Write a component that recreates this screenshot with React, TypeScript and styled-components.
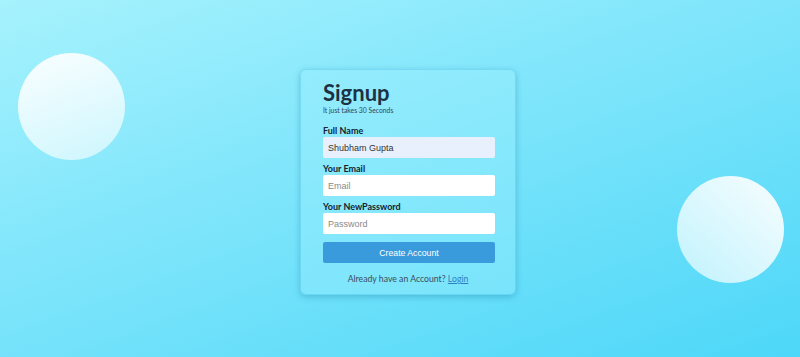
import React from 'react';
import styled, { createGlobalStyle } from 'styled-components';

const GlobalStyle = createGlobalStyle`
  html, body {
    margin: 0;
    padding: 0;
  }
  body {
    font-family: Lato, "Noto Sans", sans-serif;
  }
`;

const Page = styled.div`
  position: relative;
  width: 800px;
  height: 357px;
  overflow: hidden;
  background: linear-gradient(160deg, #a6f2fd 0%, #7ee5fb 45%, #4dd7f8 100%);
  display: flex;
  justify-content: center;
  align-items: flex-start;
  padding: 69px 0 0 16px;
  box-sizing: border-box;
`;

const Bubble = styled.div<{ $left: number; $top: number; $angle: number }>`
  position: absolute;
  left: ${p => p.$left}px;
  top: ${p => p.$top}px;
  width: 107px;
  height: 107px;
  border-radius: 50%;
  background: linear-gradient(${p => p.$angle}deg, rgba(255, 255, 255, 0.95) 0%, rgba(225, 250, 255, 0.75) 100%);
`;

const Card = styled.div`
  position: relative;
  width: 216px;
  height: 226px;
  box-sizing: border-box;
  padding: 10px 22px 0;
  border-radius: 6px;
  background: rgba(160, 240, 255, 0.35);
  border: 1px solid rgba(70, 190, 225, 0.35);
  box-shadow: 0 2px 6px rgba(20, 120, 160, 0.35);
  display: flex;
  flex-direction: column;
`;

const Title = styled.h1`
  margin: 0;
  font-size: 22px;
  font-weight: 700;
  line-height: 26px;
  color: #1d3145;
`;

const Subtitle = styled.p`
  margin: 0 0 10px;
  font-size: 6.8px;
  line-height: 9px;
  color: #344656;
`;

const Label = styled.label`
  display: block;
  font-size: 9px;
  font-weight: 700;
  line-height: 11px;
  color: #14232f;
  margin-bottom: 1px;
`;

const Input = styled.input<{ $filled?: boolean }>`
  display: block;
  width: 172px;
  height: 21px;
  box-sizing: border-box;
  border: none;
  border-radius: 2px;
  padding: 0 5px;
  margin-bottom: 5px;
  font-family: "Liberation Sans", Arial, sans-serif;
  font-size: 9px;
  color: #333;
  background: ${p => (p.$filled ? '#e8f0fe' : '#ffffff')};
  outline: none;

  &::placeholder {
    color: #8a8a8a;
  }
`;

const Button = styled.button`
  width: 172px;
  height: 21px;
  margin-top: 3px;
  border: none;
  border-radius: 2px;
  background: #3a9bdc;
  color: #ffffff;
  font-family: "Liberation Sans", Arial, sans-serif;
  font-size: 8.7px;
  cursor: pointer;
`;

const Footer = styled.p`
  margin: 10px 0 0;
  text-align: center;
  font-size: 8.7px;
  line-height: 11px;
  color: #3a4d5c;
`;

const LoginLink = styled.a`
  color: #2b7fc1;
  text-decoration: underline;
`;

export default function App() {
  return (
    <>
      <GlobalStyle />
      <Page>
        <Bubble $left={18} $top={53} $angle={160} />
        <Bubble $left={677} $top={176} $angle={225} />
        <Card>
          <Title>Signup</Title>
          <Subtitle>It just takes 30 Seconds</Subtitle>
          <Label>Full Name</Label>
          <Input $filled defaultValue="Shubham Gupta" />
          <Label>Your Email</Label>
          <Input placeholder="Email" />
          <Label>Your NewPassword</Label>
          <Input type="password" placeholder="Password" />
          <Button>Create Account</Button>
          <Footer>
            Already have an Account? <LoginLink href="#">Login</LoginLink>
          </Footer>
        </Card>
      </Page>
    </>
  );
}
